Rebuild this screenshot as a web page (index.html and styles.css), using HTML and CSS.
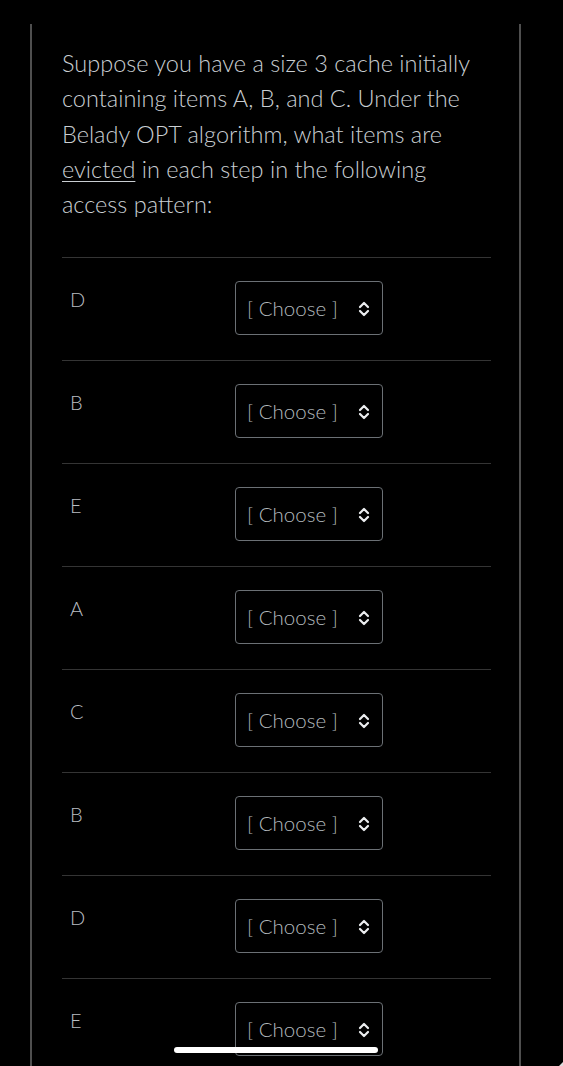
FILE: index.html
```html
<!DOCTYPE html>
<html lang="en">
<head>
<meta charset="utf-8">
<title>Question</title>
<link rel="stylesheet" href="styles.css">
</head>
<body>
<div class="question">
  <p class="prompt">Suppose you have a size 3 cache initially containing items A, B, and C. Under the Belady OPT algorithm, what items are <u>evicted</u> in each step in the following access pattern:</p>
  <div class="answers">
    <div class="row"><span class="label">D</span><div class="select"><span>[ Choose ]</span><svg class="chev" viewBox="0 0 12 16" width="12" height="16"><path d="M2 6 L6 2 L10 6 M2 10 L6 14 L10 10" fill="none" stroke="#eceef0" stroke-width="2.2" stroke-linecap="round" stroke-linejoin="round"/></svg></div></div>
    <div class="row"><span class="label">B</span><div class="select"><span>[ Choose ]</span><svg class="chev" viewBox="0 0 12 16" width="12" height="16"><path d="M2 6 L6 2 L10 6 M2 10 L6 14 L10 10" fill="none" stroke="#eceef0" stroke-width="2.2" stroke-linecap="round" stroke-linejoin="round"/></svg></div></div>
    <div class="row"><span class="label">E</span><div class="select"><span>[ Choose ]</span><svg class="chev" viewBox="0 0 12 16" width="12" height="16"><path d="M2 6 L6 2 L10 6 M2 10 L6 14 L10 10" fill="none" stroke="#eceef0" stroke-width="2.2" stroke-linecap="round" stroke-linejoin="round"/></svg></div></div>
    <div class="row"><span class="label">A</span><div class="select"><span>[ Choose ]</span><svg class="chev" viewBox="0 0 12 16" width="12" height="16"><path d="M2 6 L6 2 L10 6 M2 10 L6 14 L10 10" fill="none" stroke="#eceef0" stroke-width="2.2" stroke-linecap="round" stroke-linejoin="round"/></svg></div></div>
    <div class="row"><span class="label">C</span><div class="select"><span>[ Choose ]</span><svg class="chev" viewBox="0 0 12 16" width="12" height="16"><path d="M2 6 L6 2 L10 6 M2 10 L6 14 L10 10" fill="none" stroke="#eceef0" stroke-width="2.2" stroke-linecap="round" stroke-linejoin="round"/></svg></div></div>
    <div class="row"><span class="label">B</span><div class="select"><span>[ Choose ]</span><svg class="chev" viewBox="0 0 12 16" width="12" height="16"><path d="M2 6 L6 2 L10 6 M2 10 L6 14 L10 10" fill="none" stroke="#eceef0" stroke-width="2.2" stroke-linecap="round" stroke-linejoin="round"/></svg></div></div>
    <div class="row"><span class="label">D</span><div class="select"><span>[ Choose ]</span><svg class="chev" viewBox="0 0 12 16" width="12" height="16"><path d="M2 6 L6 2 L10 6 M2 10 L6 14 L10 10" fill="none" stroke="#eceef0" stroke-width="2.2" stroke-linecap="round" stroke-linejoin="round"/></svg></div></div>
    <div class="row"><span class="label">E</span><div class="select"><span>[ Choose ]</span><svg class="chev" viewBox="0 0 12 16" width="12" height="16"><path d="M2 6 L6 2 L10 6 M2 10 L6 14 L10 10" fill="none" stroke="#eceef0" stroke-width="2.2" stroke-linecap="round" stroke-linejoin="round"/></svg></div></div>
  </div>
</div>
<div class="home-indicator"></div>
<div class="corner"></div>
</body>
</html>
```
FILE: styles.css
```css
html, body {
  margin: 0;
  padding: 0;
  background: #000;
}
body {
  font-family: Lato, "Open Sans", sans-serif;
  font-weight: 300;
  color: #c9ced2;
  overflow: hidden;
  height: 1066px;
}
.question {
  box-sizing: border-box;
  width: 491px;
  margin: 24px 0 0 30px;
  padding: 22px 28px 0 30px;
  border-left: 2px solid #4f4f4f;
  border-right: 2px solid #4f4f4f;
}
.prompt {
  margin: 0 0 35px 0;
  font-size: 23.5px;
  line-height: 35.25px;
}
.prompt u {
  text-decoration-thickness: 1px;
  text-underline-offset: 3px;
}
.answers {
  display: flex;
  flex-direction: column;
}
.row {
  display: grid;
  grid-template-columns: 173px auto;
  align-items: start;
  border-top: 1px solid #343434;
  padding: 23px 0 25px 0;
}
.label {
  padding: 3px 0 0 8px;
  font-size: 20px;
  line-height: 30px;
  color: #b9bec3;
}
.select {
  box-sizing: border-box;
  width: 148px;
  height: 54px;
  border: 1px solid #6b7075;
  border-radius: 4px;
  display: flex;
  align-items: center;
  justify-content: space-between;
  padding: 0 12px 0 11px;
  font-size: 20.5px;
  color: #b3b9be;
}
.chev {
  display: block;
  margin-top: 1px;
}
.home-indicator {
  position: fixed;
  left: 174px;
  bottom: 13px;
  width: 204px;
  height: 6px;
  border-radius: 3px;
  background: #fff;
}
.corner {
  position: fixed;
  right: 0;
  bottom: 0;
  width: 0;
  height: 0;
  border-left: 4px solid transparent;
  border-bottom: 4px solid #ddd;
}
```
